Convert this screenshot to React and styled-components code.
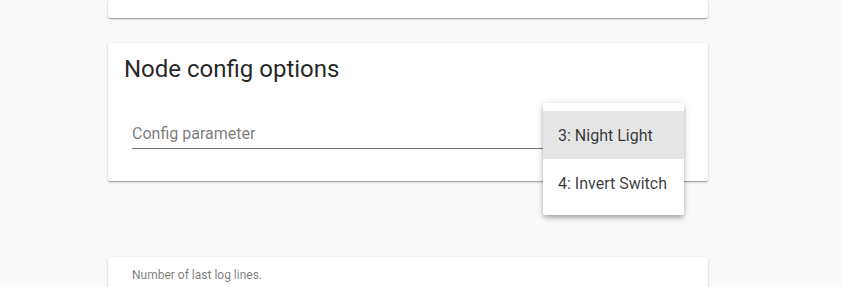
import React from "react";
import styled, { createGlobalStyle } from "styled-components";

const GlobalStyle = createGlobalStyle`
  html, body {
    margin: 0;
    padding: 0;
    background: #fafafa;
    font-family: Roboto, "Noto Sans", sans-serif;
    overflow: hidden;
  }
`;

const Page = styled.div`
  display: flex;
  flex-direction: column;
  width: 600px;
  padding-left: 108px;
`;

const Card = styled.div`
  position: relative;
  background: #fff;
  border-radius: 2px;
  box-shadow: 0 1px 3px rgba(0, 0, 0, 0.2), 0 1px 1px rgba(0, 0, 0, 0.14),
    0 2px 1px -1px rgba(0, 0, 0, 0.12);
  margin-top: ${(p) => p.$gap || 0}px;
  height: ${(p) => (p.$height ? `${p.$height}px` : "auto")};
  box-sizing: border-box;
`;

const Title = styled.h2`
  margin: 0;
  padding: 10px 16px 0;
  font-size: 24px;
  line-height: 32px;
  font-weight: 400;
  color: rgba(0, 0, 0, 0.87);
`;

const FieldWrap = styled.div`
  margin: 36px 24px 0;
  padding-bottom: 32px;
`;

const Field = styled.div`
  height: 28px;
  display: flex;
  align-items: center;
  border-bottom: 1px solid rgba(0, 0, 0, 0.54);
  font-size: 16px;
  color: rgba(0, 0, 0, 0.54);
  box-sizing: border-box;
  padding-bottom: 2px;
`;

const Menu = styled.ul`
  position: absolute;
  left: 435px;
  top: 60px;
  width: 141px;
  margin: 0;
  padding: 8px 0;
  list-style: none;
  background: #fff;
  border-radius: 2px;
  box-shadow: 0 2px 4px -1px rgba(0, 0, 0, 0.2), 0 4px 5px 0 rgba(0, 0, 0, 0.14),
    0 1px 10px 0 rgba(0, 0, 0, 0.12);
`;

const Item = styled.li`
  height: 48px;
  display: flex;
  align-items: center;
  padding: 0 15px;
  font-size: 16px;
  color: rgba(0, 0, 0, 0.78);
  background: ${(p) => (p.$active ? "#e5e5e5" : "transparent")};
  white-space: nowrap;
`;

const Hint = styled.div`
  padding: 11px 24px 24px;
  font-size: 12px;
  color: rgba(0, 0, 0, 0.54);
`;

export default function App() {
  return (
    <>
      <GlobalStyle />
      <Page>
        <Card $height={18} />
        <Card $gap={25}>
          <Title>Node config options</Title>
          <FieldWrap>
            <Field>Config parameter</Field>
          </FieldWrap>
          <Menu>
            <Item $active>3: Night Light</Item>
            <Item>4: Invert Switch</Item>
          </Menu>
        </Card>
        <Card $gap={76}>
          <Hint>Number of last log lines.</Hint>
        </Card>
      </Page>
    </>
  );
}
